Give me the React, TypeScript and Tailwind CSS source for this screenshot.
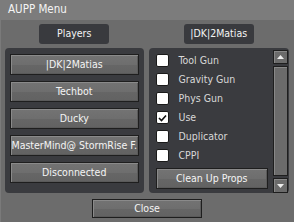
import React from "react"

const players = ["|DK|2Matias", "Techbot", "Ducky", "MasterMind@ StormRise F.", "Disconnected"]
const tools = [
  { name: "Tool Gun", on: false },
  { name: "Gravity Gun", on: false },
  { name: "Phys Gun", on: false },
  { name: "Use", on: true },
  { name: "Duplicator", on: false },
  { name: "CPPI", on: false },
]

const btn =
  "flex items-center justify-center whitespace-nowrap overflow-hidden border border-[#1e1e1e] bg-[linear-gradient(#737373_0%,#6e6e6e_50%,#666666_51%,#626262_100%)] shadow-[inset_1px_1px_0_#8a8a8a,inset_-1px_-1px_0_#5a5a5a] text-[#f4f4f4]"

const Tab = ({ label }: { label: string }) => (
  <div className="mx-auto flex h-[20px] w-[70px] items-center justify-center rounded-[3px] bg-[#393a3e] text-[#f4f4f4]">
    {label}
  </div>
)

const Check = ({ on }: { on: boolean }) => (
  <div className="flex h-[13px] w-[13px] shrink-0 items-center justify-center rounded-[2px] border border-[#1a1a1a] bg-white">
    {on && (
      <svg width="9" height="8" viewBox="0 0 9 8">
        <path d="M1 4 L3.5 6.5 L8 1.5" stroke="#111" strokeWidth="1.6" fill="none" />
      </svg>
    )}
  </div>
)

const ScrollBtn = ({ up, h }: { up: boolean; h: string }) => (
  <div className={`${h} flex items-center justify-center border border-[#1e1e1e] bg-[#6b6b6b] shadow-[inset_1px_1px_0_#888]`}>
    <svg width="7" height="4" viewBox="0 0 7 4">
      <path d={up ? "M0 4 L3.5 0 L7 4 Z" : "M0 0 L3.5 4 L7 0 Z"} fill="#eee" />
    </svg>
  </div>
)

export default function App() {
  return (
    <div
      className="flex h-[222px] w-[294px] flex-col bg-[#6c6c6c] text-[10.5px] shadow-[inset_1px_0_0_#7a7a7a]"
      style={{ fontFamily: '"DejaVu Sans Condensed", "DejaVu Sans", sans-serif', fontStretch: "condensed" }}
    >
      <div className="flex h-[20px] items-center bg-[#7c7c7c] pl-[8px] text-[11.5px] text-[#f4f4f4]">AUPP Menu</div>
      <div className="flex gap-[5px] px-[5px] pt-[4px]">
        <div className="flex w-[139px] flex-col gap-[4px]">
          <Tab label="Players" />
          <div className="flex h-[145px] flex-col gap-[6px] rounded-[4px] bg-[#3a3b3f] px-[5px] pt-[6px]">
            {players.map((p) => (
              <div key={p} className={`${btn} h-[21px]`}>
                {p}
              </div>
            ))}
          </div>
        </div>
        <div className="flex w-[141px] flex-col gap-[4px]">
          <Tab label="|DK|2Matias" />
          <div className="flex h-[145px] rounded-[4px] bg-[#3a3b3f]">
            <div className="flex flex-1 flex-col pl-[7px] pr-[5px] pt-[6px]">
              {tools.map((t) => (
                <div key={t.name} className="flex h-[19px] items-start gap-[10px]">
                  <Check on={t.on} />
                  <span className="leading-[13px] text-[#d8d8d8]">{t.name}</span>
                </div>
              ))}
              <div className={`${btn} h-[21px]`}>Clean Up Props</div>
            </div>
            <div className="mr-[1px] mt-[2px] flex w-[15px] flex-col gap-[2px]">
              <ScrollBtn up h="h-[14px]" />
              <div className="flex-1 border border-[#1e1e1e] bg-[#6b6b6b] shadow-[inset_1px_1px_0_#888]" />
              <ScrollBtn up={false} h="h-[15px]" />
            </div>
          </div>
        </div>
      </div>
      <div className={`${btn} mx-auto mt-[6px] h-[19px] w-[110px]`}>Close</div>
    </div>
  )
}
